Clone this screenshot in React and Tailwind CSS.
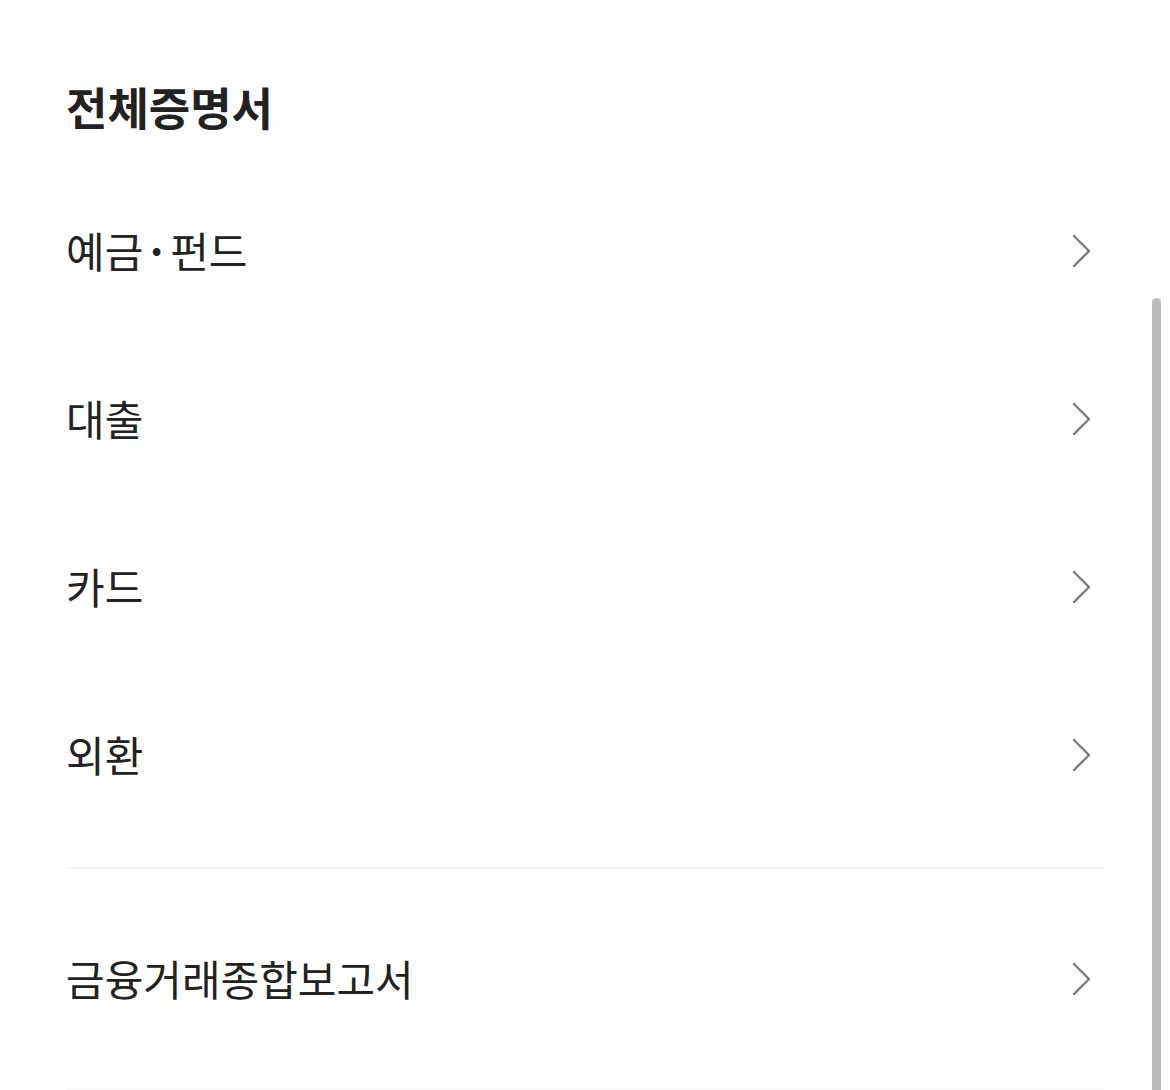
import { useState } from "react";

const Chevron = () => (
  <svg width="32" height="36" viewBox="0 0 32 36" fill="none" className="shrink-0">
    <path d="M2 3 L17 18 L2 33" stroke="#7b7b7b" strokeWidth="2.4" strokeLinecap="round" strokeLinejoin="round" />
  </svg>
);

const Row = ({ children }) => (
  <button className="w-full h-[168px] flex items-center justify-between text-left">
    <span className="mb-[4px] text-[42px] text-[#222]">{children}</span>
    <Chevron />
  </button>
);

const App = () => {
  const [items] = useState(["대출", "카드", "외환"]);

  return (
    <main
      className="relative w-[1170px] h-[1090px] overflow-hidden bg-white px-[66px]"
      style={{ fontFamily: '"Noto Sans CJK KR", "Noto Sans", sans-serif' }}
    >
      <h1 className="pt-[77px] pb-[30px] h-[167px] text-[45px] font-bold leading-[60px] text-[#222]">
        전체증명서
      </h1>
      <div>
        <Row>
          예금<span className="px-[1px] font-bold">·</span>펀드
        </Row>
        {items.map((item) => (
          <Row key={item}>{item}</Row>
        ))}
      </div>
      <div className="mt-[28px] h-[2px] bg-[#f3f3f3]" />
      <div className="py-[26px]">
        <Row>금융거래종합보고서</Row>
      </div>
      <div className="h-[2px] bg-[#f3f3f3]" />

      {/* scrollbar */}
      <div className="absolute right-[9px] top-[298px] w-[9px] h-[820px] rounded-full bg-[#bbbbbb]" />
    </main>
  );
};

export default App;
